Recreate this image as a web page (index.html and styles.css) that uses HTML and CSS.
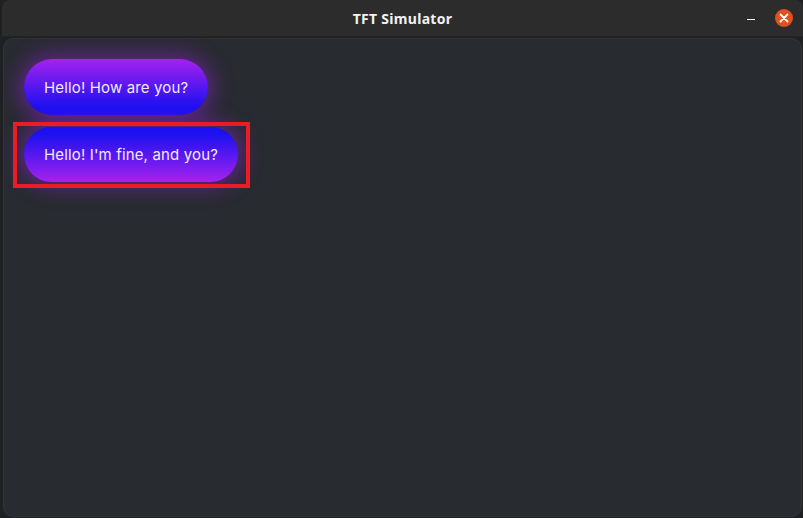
FILE: index.html
```html
<!DOCTYPE html>
<html lang="en">
  <head>
    <meta charset="UTF-8" />
    <meta name="viewport" content="width=device-width, initial-scale=1.0" />
    <title>TFT Simulator</title>
    <link rel="stylesheet" href="styles.css">
  </head>
  <body>
    <div class="window">
      <header class="titlebar">
        <span class="title">TFT Simulator</span>
        <div class="controls">
          <span class="minimize"></span>
          <span class="close">
            <svg width="10" height="10" viewBox="0 0 10 10">
              <path d="M1.5 1.5L8.5 8.5M8.5 1.5L1.5 8.5" stroke="#fff" stroke-width="1.8" stroke-linecap="round" />
            </svg>
          </span>
        </div>
      </header>

      <main class="content">
        <button class="bubble bubble-up">Hello! How are you?</button>
        <div class="selected">
          <button class="bubble bubble-down">Hello! I'm fine, and you?</button>
          <div class="highlight"></div>
        </div>
      </main>
    </div>
  </body>
</html>
```

FILE: styles.css
```css
html,
body {
  height: 100%;
}

body {
  margin: 0;
  background-color: #1f2022;
  overflow: hidden;
}

.window {
  height: 518px;
  display: flex;
  flex-direction: column;
}

.titlebar {
  height: 37px;
  flex: none;
  position: relative;
  display: flex;
  justify-content: center;
  align-items: center;
  margin-left: 2px;
  background-color: #2c2c2c;
  border-radius: 8px 8px 0 0;
  border-bottom: 1px solid #242424;
  box-sizing: border-box;
}

.title {
  font-family: "Noto Sans", sans-serif;
  font-size: 14px;
  font-weight: 700;
  letter-spacing: 0.3px;
  color: #f2f2f2;
}

.controls {
  position: absolute;
  right: 10px;
  top: 9px;
  display: flex;
  align-items: center;
  gap: 20px;
}

.minimize {
  width: 8px;
  height: 1px;
  margin-top: 3px;
  background-color: #ffffff;
}

.close {
  width: 18px;
  height: 18px;
  border-radius: 50%;
  background-color: #e2501c;
  display: flex;
  justify-content: center;
  align-items: center;
}

.content {
  flex: 1;
  margin: 1px 1px 1px 3px;
  padding: 20px;
  background-color: #282b30;
  border-radius: 10px;
  border: 1px solid #303338;
  display: flex;
  flex-direction: column;
  align-items: flex-start;
  gap: 12px;
  box-sizing: border-box;
}

.bubble {
  height: 56px;
  padding: 0 20px;
  border: none;
  border-radius: 28px;
  color: #f2eaff;
  font-family: "Inter", sans-serif;
  font-size: 15px;
  letter-spacing: 0.15px;
  white-space: nowrap;
}

.bubble-up {
  background: linear-gradient(to bottom, #a522ee, #1a10f0 88%);
  box-shadow: 0 0 20px 6px rgba(160, 32, 240, 0.42);
}

.bubble-down {
  display: block;
  height: 55px;
  background: linear-gradient(to bottom, #1a10f0 12%, #a522ee);
  box-shadow: 0 0 20px 6px rgba(160, 32, 240, 0.42);
}

.selected {
  position: relative;
}

.highlight {
  position: absolute;
  top: -5px;
  left: -11px;
  right: -12px;
  bottom: -6px;
  border: 4px solid #ed1c24;
}
```
